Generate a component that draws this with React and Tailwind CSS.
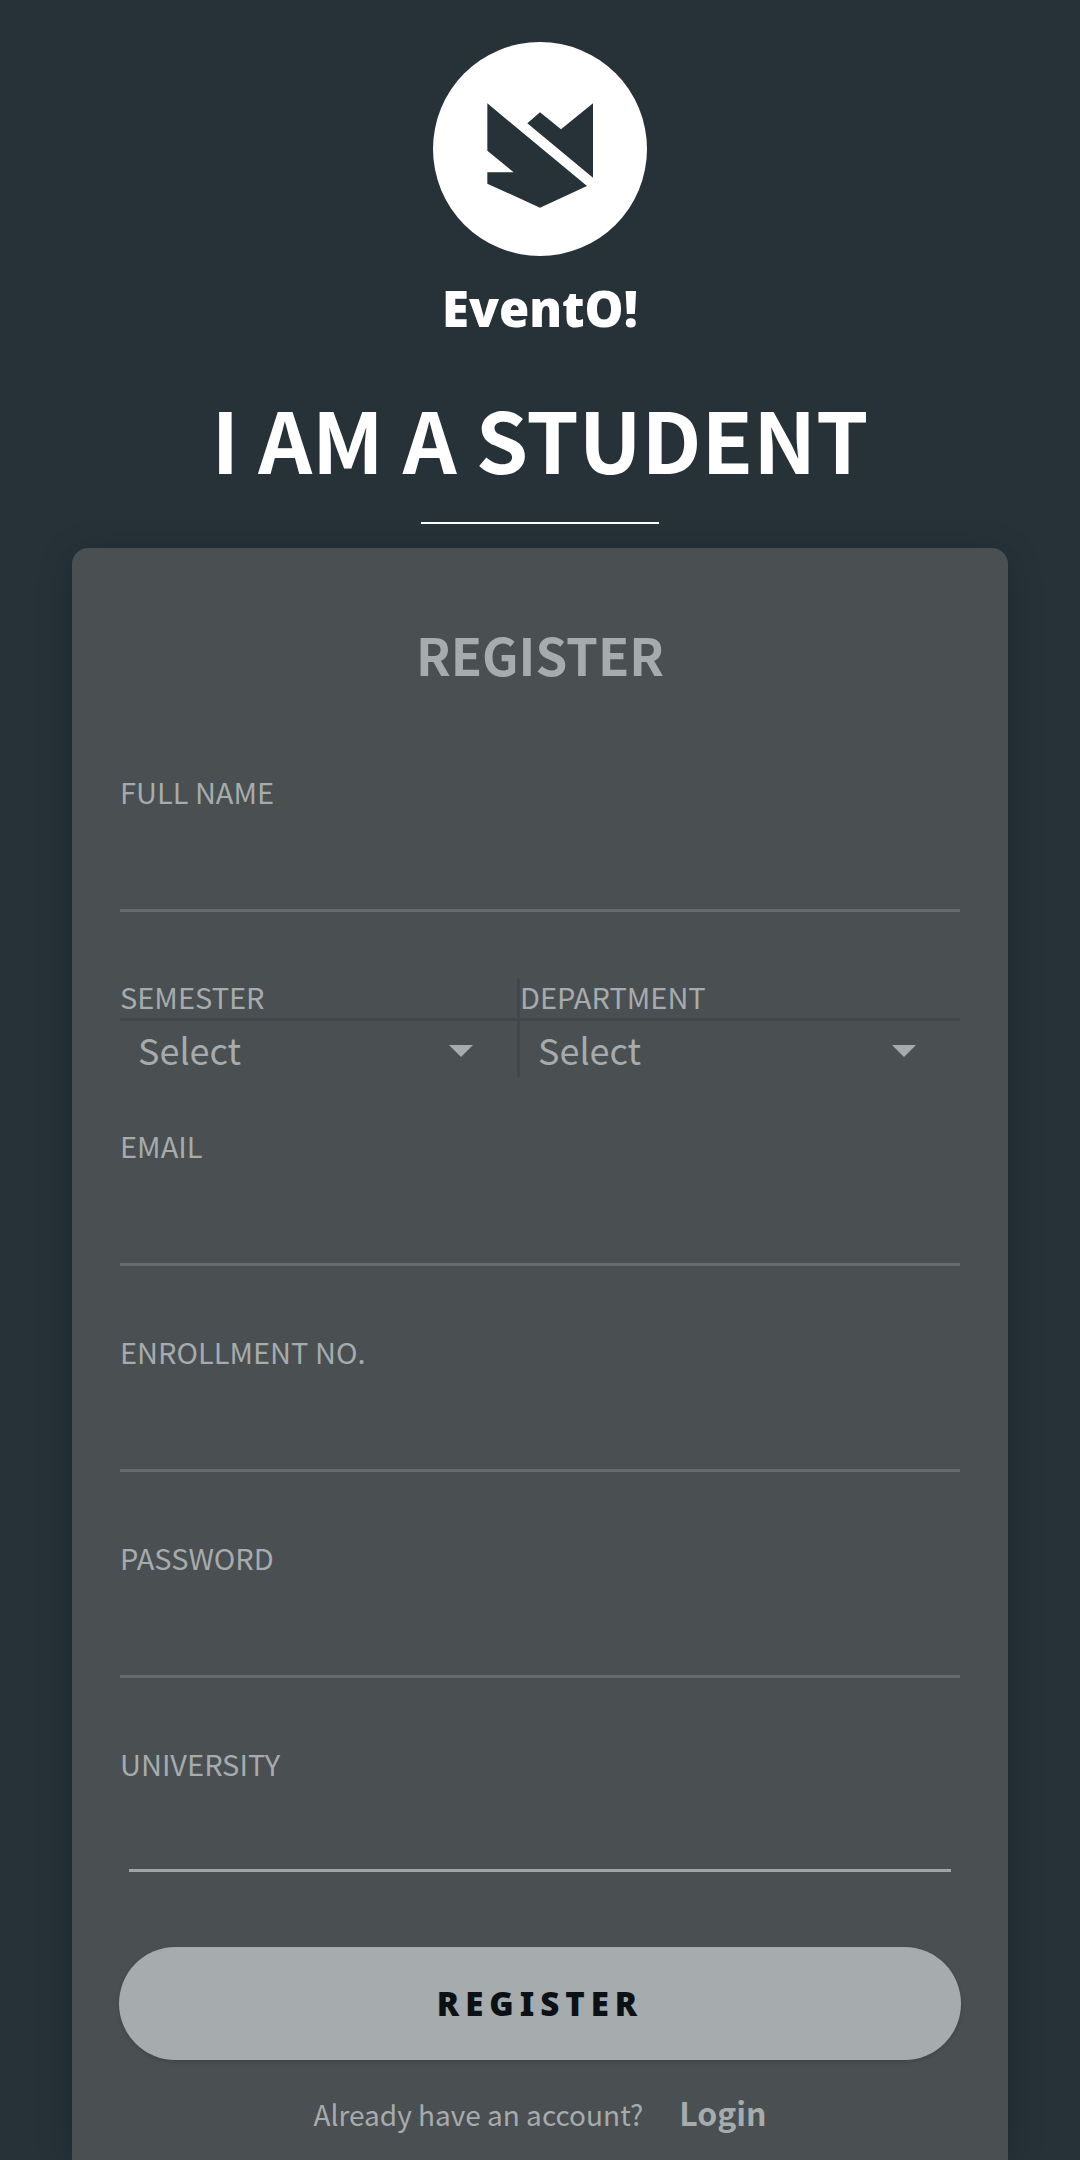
import React from "react";

function Logo() {
  return (
    <svg viewBox="0 0 642 642" className="size-[214px]" role="img" aria-label="EventO! logo">
      <circle cx="321" cy="321" r="321" fill="#fff" />
      <g fill="#263238">
        <path d="M163 184 462 432 321 497 163 425V391H242L163 326Z" />
        <path d="M283 244 321 211 384 262 480 184V407Z" />
      </g>
    </svg>
  );
}

function Label({ id, children }) {
  return (
    <label htmlFor={id} className="block text-[29px] leading-9">
      {children}
    </label>
  );
}

function Field({ id, label, type = "text" }) {
  return (
    <div>
      <Label id={id}>{label}</Label>
      <input
        id={id}
        type={type}
        className="block h-[103px] w-full border-b-[3px] border-[#666b6e] bg-transparent text-[29px] outline-none"
      />
    </div>
  );
}

function SelectCell({ id, label, className = "" }) {
  return (
    <div className={className}>
      <div className="border-b-[3px] border-[#43474a] pb-1">
        <Label id={id}>{label}</Label>
      </div>
      <div className="relative">
        <select
          id={id}
          className="block h-14 w-full appearance-none bg-transparent pl-[18px] text-[36px] leading-[56px] outline-none"
        >
          <option>Select</option>
        </select>
        <svg
          viewBox="0 0 24 12"
          className="pointer-events-none absolute top-6 right-11 h-3 w-6"
          fill="currentColor"
          aria-hidden="true"
        >
          <path d="M0 0H24L12 12Z" />
        </svg>
      </div>
    </div>
  );
}

export default function App() {
  return (
    <main className="flex min-h-screen flex-col items-center bg-[#263238] px-[72px] pt-[42px] font-['Noto_Sans_CJK_SC',sans-serif] text-white">
      <Logo />
      <p className="mt-5 font-['Noto_Sans',sans-serif] text-[49px] leading-[64px] font-black">EventO!</p>
      <h1 className="mt-[46px] text-center text-[84px] leading-[104px] font-bold">I AM A STUDENT</h1>
      <div className="mt-8 h-0.5 w-[238px] bg-white" />

      <section className="mt-6 flex w-full flex-1 flex-col rounded-t-2xl bg-[#4a4f51] px-12 pb-6 text-[#a6abad] shadow-[0_6px_36px_rgba(0,0,0,0.18)]">
        <h2 className="mt-[74px] text-center text-[51px] leading-[64px] font-bold">REGISTER</h2>

        <form className="mt-[87px]" onSubmit={(e) => e.preventDefault()}>
          <Field id="name" label="FULL NAME" />

          <div className="mt-[66px] grid grid-cols-[10fr_11fr]">
            <SelectCell id="semester" label="SEMESTER" className="border-r-[3px] border-[#43474a]" />
            <SelectCell id="department" label="DEPARTMENT" />
          </div>

          <div className="mt-[50px] flex flex-col gap-[67px]">
            <Field id="email" label="EMAIL" type="email" />
            <Field id="enrollment" label="ENROLLMENT NO." />
            <Field id="password" label="PASSWORD" type="password" />
            <div>
              <Label id="university">UNIVERSITY</Label>
              <div className="px-[9px]">
                <input
                  id="university"
                  type="text"
                  className="block h-[91px] w-full border-b-[3px] border-[#a0a5a7] bg-transparent text-[29px] outline-none"
                />
              </div>
            </div>
          </div>

          <div className="-mx-px mt-[75px]">
            <button
              type="submit"
              className="h-[113px] w-full rounded-full bg-[#a6abad] font-['Noto_Sans',sans-serif] text-[33px] font-black tracking-[6px] text-[#0b1114] shadow-[0_2px_4px_rgba(0,0,0,0.12)]"
            >
              REGISTER
            </button>
          </div>
        </form>

        <p className="mt-8 flex items-baseline justify-center gap-9 text-[28px] leading-10">
          Already have an account?
          <a href="#login" className="text-[32px] font-bold">
            Login
          </a>
        </p>
      </section>
    </main>
  );
}
